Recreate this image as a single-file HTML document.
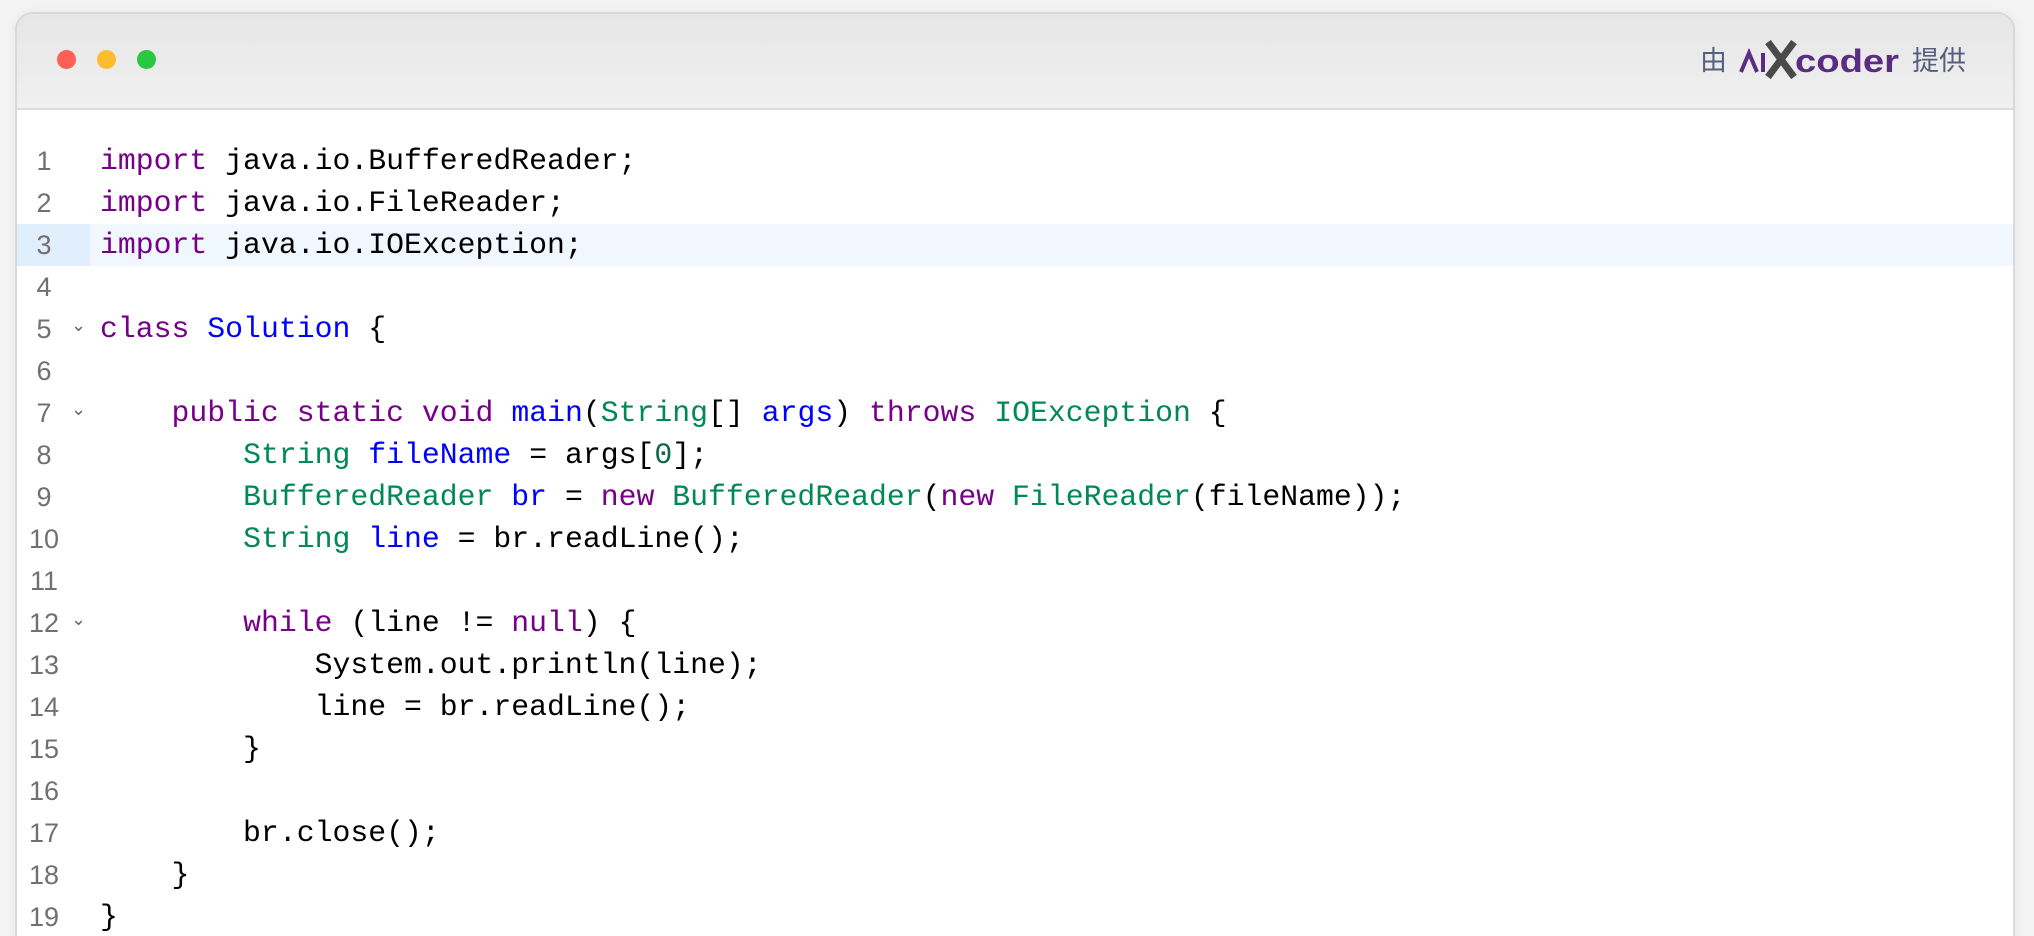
<!DOCTYPE html>
<html><head><meta charset="utf-8"><style>
html,body{margin:0;padding:0;width:2034px;height:936px;overflow:hidden;}
body{background:#f4f4f4;position:relative;font-family:"Liberation Sans",sans-serif;}
.win{position:absolute;left:15px;top:12px;width:1996px;height:960px;border:2px solid #d8d8d8;border-radius:18px;background:#fff;overflow:hidden;box-shadow:0 0 12px rgba(0,0,0,0.06);}
.clip{position:absolute;left:0;top:0;width:2034px;height:936px;overflow:hidden;}
.hdr{position:absolute;left:0;top:0;right:0;height:94px;background:linear-gradient(#e6e6e6,#f0f0f0);border-bottom:2px solid #dcdcdc;}
.dot{position:absolute;top:36px;width:19px;height:19px;border-radius:50%;}
.cjk{position:absolute;top:27px;font-family:"Liberation Sans","Noto Sans CJK SC",sans-serif;font-size:27px;color:#56607e;line-height:40px;}
.code{position:absolute;left:0;top:126px;right:0;}
.ln{position:relative;height:42px;line-height:42px;}
.ln.hl{background:#f1f7fe;}
.ln.hl .g{background:#e1effc;}
.g{position:absolute;left:0;top:0;width:73px;height:42px;}
.num{position:absolute;left:-2px;width:58px;text-align:center;font-family:"Liberation Sans",sans-serif;font-size:27px;color:#707070;}
.fold{position:absolute;left:54px;top:-3px;font-size:18px;color:#666;font-family:"DejaVu Sans",sans-serif;}
.t{position:absolute;left:83px;top:0;font-family:"Liberation Mono",monospace;font-size:29.8px;white-space:pre;color:#000;}
.k{color:#770088}.d{color:#0000ff}.v{color:#008855}.n{color:#116644}
</style></head><body>
<div class="clip">
<div class="win">
 <div class="hdr">
  <div class="dot" style="left:40px;background:#fe5f57"></div>
  <div class="dot" style="left:80px;background:#febc2e"></div>
  <div class="dot" style="left:120px;background:#28c840"></div>
  <div class="cjk" style="left:1683px">由</div>
  <svg style="position:absolute;left:1720px;top:26px" width="170" height="40" viewBox="0 0 170 40">
   <path d="M4 32 L12 13 L20 32" fill="none" stroke="#5a2d82" stroke-width="4"/>
   <rect x="24" y="13" width="4" height="19" fill="#5a2d82"/>
   <path d="M31 2 L57 37 M57 2 L31 37" stroke="#4a4a4a" stroke-width="7"/>
   <text x="58" y="32" font-family="Liberation Sans,sans-serif" font-weight="bold" font-size="32" fill="#5a2d82" textLength="104" lengthAdjust="spacingAndGlyphs">coder</text>
  </svg>
  <div class="cjk" style="left:1895px">提供</div>
 </div>
 <div class="code">
  <div class="ln"><div class="g"><span class="num">1</span></div><span class="t"><span class="k">import</span> java.io.BufferedReader;</span></div>
  <div class="ln"><div class="g"><span class="num">2</span></div><span class="t"><span class="k">import</span> java.io.FileReader;</span></div>
  <div class="ln hl"><div class="g"><span class="num">3</span></div><span class="t"><span class="k">import</span> java.io.IOException;</span></div>
  <div class="ln"><div class="g"><span class="num">4</span></div></div>
  <div class="ln"><div class="g"><span class="num">5</span><span class="fold">⌄</span></div><span class="t"><span class="k">class</span> <span class="d">Solution</span> {</span></div>
  <div class="ln"><div class="g"><span class="num">6</span></div></div>
  <div class="ln"><div class="g"><span class="num">7</span><span class="fold">⌄</span></div><span class="t">    <span class="k">public</span> <span class="k">static</span> <span class="k">void</span> <span class="d">main</span>(<span class="v">String</span>[] <span class="d">args</span>) <span class="k">throws</span> <span class="v">IOException</span> {</span></div>
  <div class="ln"><div class="g"><span class="num">8</span></div><span class="t">        <span class="v">String</span> <span class="d">fileName</span> = args[<span class="n">0</span>];</span></div>
  <div class="ln"><div class="g"><span class="num">9</span></div><span class="t">        <span class="v">BufferedReader</span> <span class="d">br</span> = <span class="k">new</span> <span class="v">BufferedReader</span>(<span class="k">new</span> <span class="v">FileReader</span>(fileName));</span></div>
  <div class="ln"><div class="g"><span class="num">10</span></div><span class="t">        <span class="v">String</span> <span class="d">line</span> = br.readLine();</span></div>
  <div class="ln"><div class="g"><span class="num">11</span></div></div>
  <div class="ln"><div class="g"><span class="num">12</span><span class="fold">⌄</span></div><span class="t">        <span class="k">while</span> (line != <span class="k">null</span>) {</span></div>
  <div class="ln"><div class="g"><span class="num">13</span></div><span class="t">            System.out.println(line);</span></div>
  <div class="ln"><div class="g"><span class="num">14</span></div><span class="t">            line = br.readLine();</span></div>
  <div class="ln"><div class="g"><span class="num">15</span></div><span class="t">        }</span></div>
  <div class="ln"><div class="g"><span class="num">16</span></div></div>
  <div class="ln"><div class="g"><span class="num">17</span></div><span class="t">        br.close();</span></div>
  <div class="ln"><div class="g"><span class="num">18</span></div><span class="t">    }</span></div>
  <div class="ln"><div class="g"><span class="num">19</span></div><span class="t">}</span></div>
 </div>
</div>
</div>
</body></html>
